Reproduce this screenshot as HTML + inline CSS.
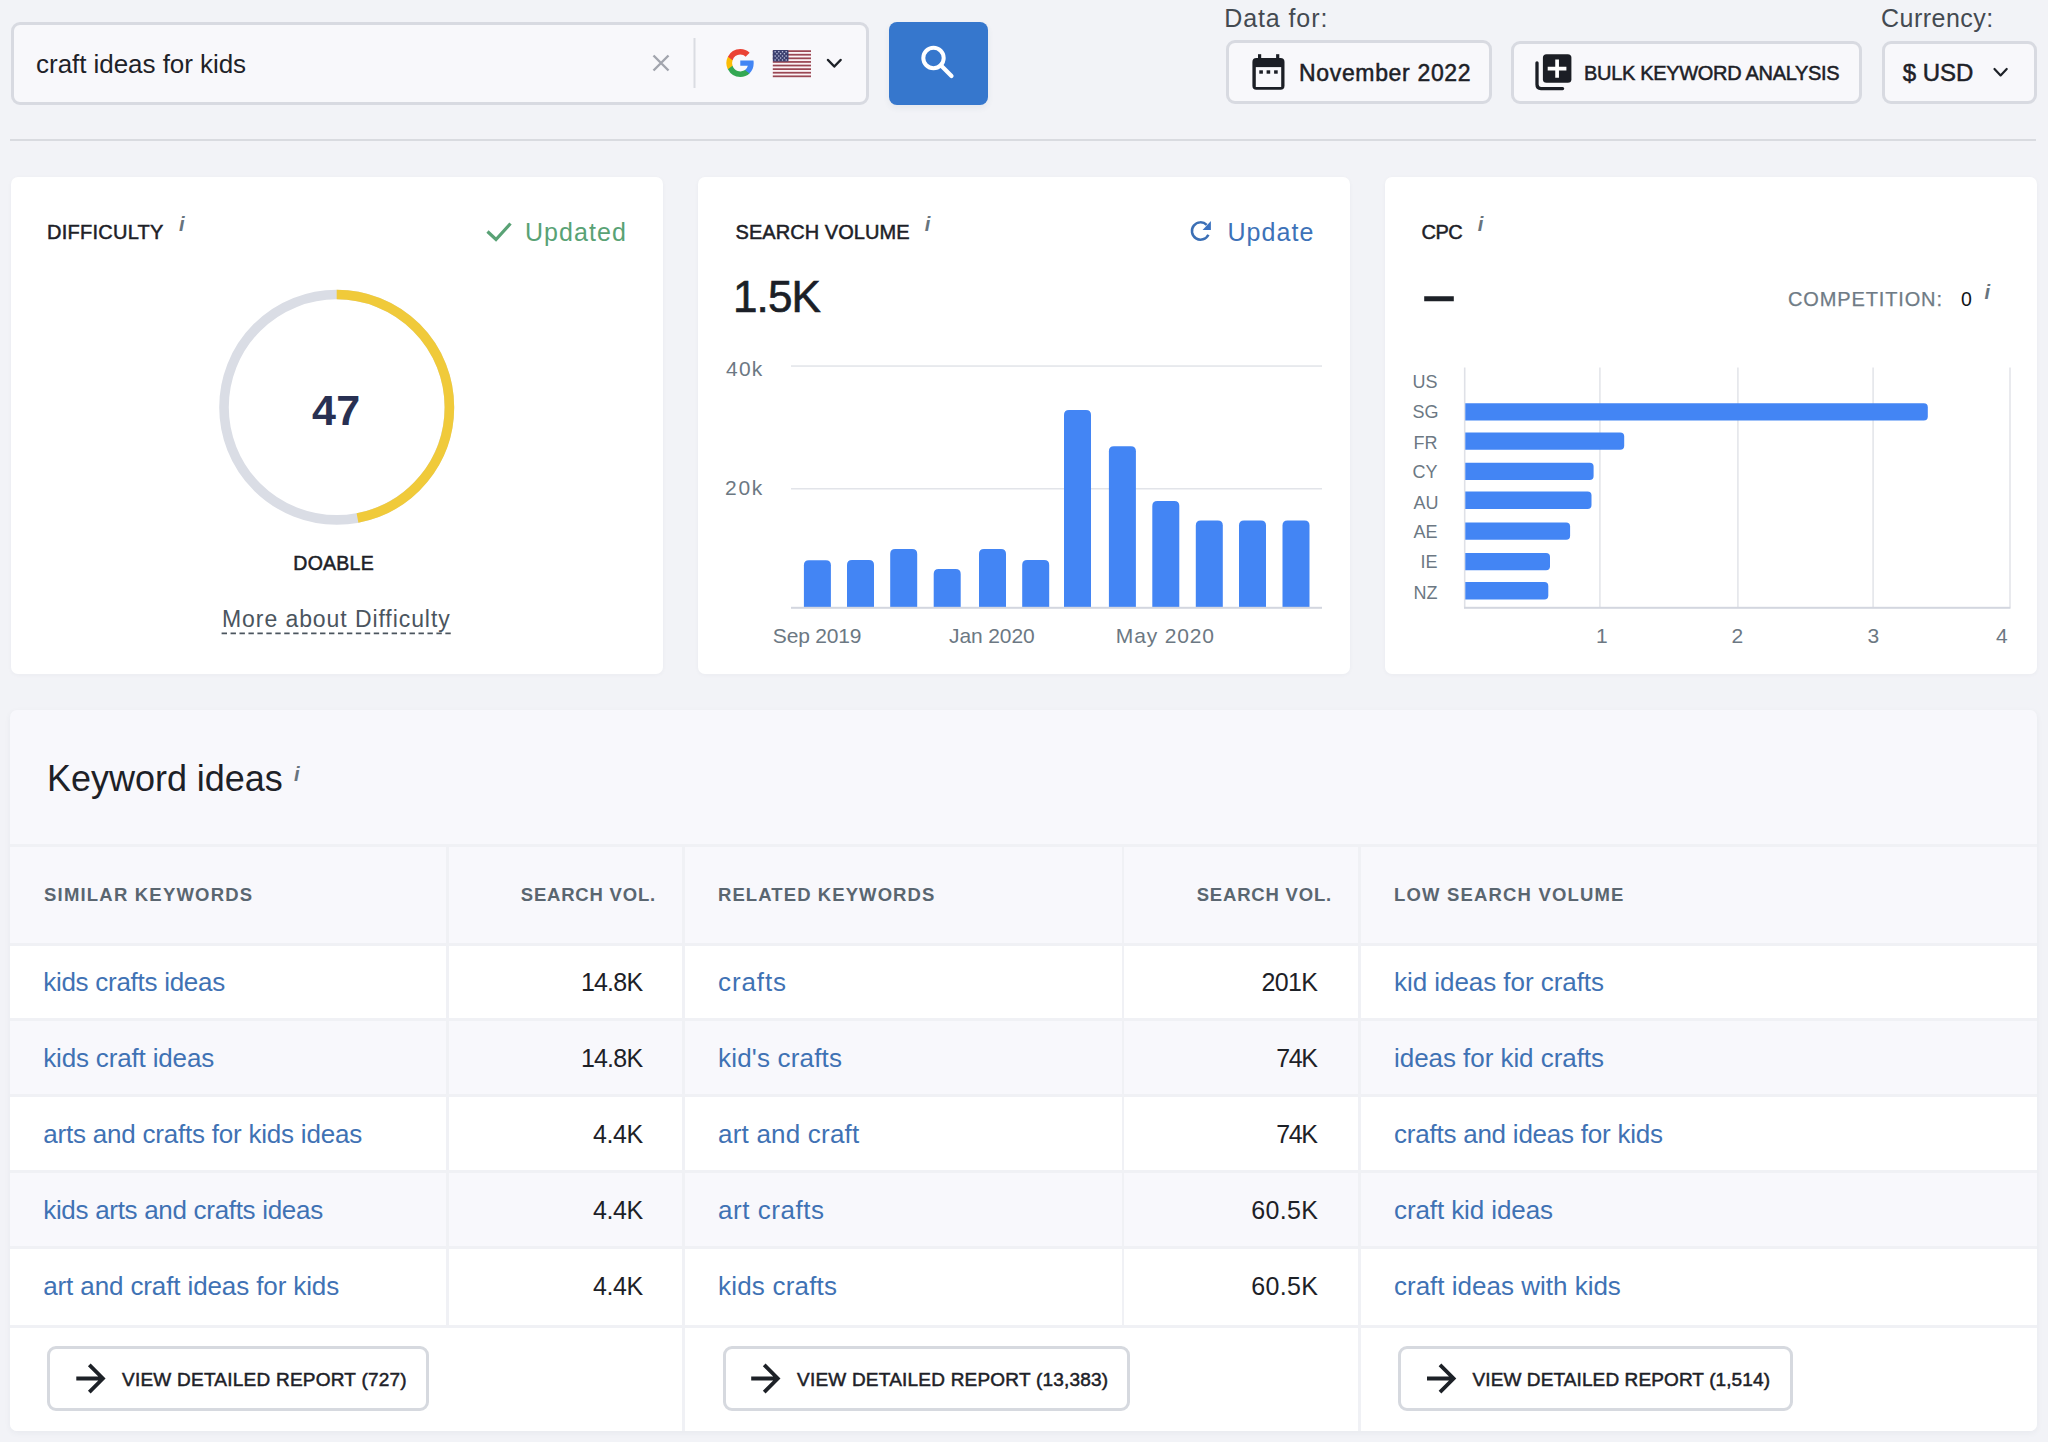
<!DOCTYPE html>
<html><head><meta charset="utf-8"><title>Keyword research</title>
<style>
html,body{margin:0;padding:0;}
body{width:2048px;height:1442px;overflow:hidden;background:#f2f3f7;position:relative;font-family:"Liberation Sans",sans-serif;}
.t{position:absolute;white-space:nowrap;line-height:1;font-family:"Liberation Sans",sans-serif;}
.a{position:absolute;box-sizing:border-box;}
.card{position:absolute;background:#fff;border-radius:7px;box-shadow:0 1px 4px rgba(40,50,80,0.04);}
.btn{position:absolute;box-sizing:border-box;border:3px solid #d8dae1;border-radius:9px;background:#f8f8fb;}
.wbtn{position:absolute;box-sizing:border-box;border:3px solid #d6d9df;border-radius:9px;background:#fff;}
svg{position:absolute;overflow:visible;}

</style></head>
<body>
<!-- header -->
<div class="btn" style="left:11px;top:22px;width:858px;height:83px;"></div>
<svg style="left:0;top:0" width="2048" height="150">
  <path d="M653.5 55.5 L668.5 70.5 M668.5 55.5 L653.5 70.5" stroke="#a2a5ae" stroke-width="2.4" fill="none"/>
  <rect x="693.5" y="38" width="2" height="50" fill="#dadce2"/>
  <!-- google G -->
  <g transform="translate(726.3,49) scale(1.165)">
    <path d="M23.5 12.27c0-.8-.07-1.57-.2-2.3H12v4.35h6.46a5.52 5.52 0 0 1-2.4 3.62v3h3.88c2.27-2.1 3.56-5.19 3.56-8.67z" fill="#4285F4"/>
    <path d="M12 24c3.24 0 5.96-1.07 7.94-2.9l-3.88-3a7.2 7.2 0 0 1-10.7-3.78H1.36v3.1A12 12 0 0 0 12 24z" fill="#34A853"/>
    <path d="M5.36 14.32a7.1 7.1 0 0 1 0-4.64v-3.1H1.36a12 12 0 0 0 0 10.84l4-3.1z" fill="#FBBC05"/>
    <path d="M12 4.77c1.76 0 3.34.6 4.59 1.8l3.44-3.44A11.5 11.5 0 0 0 12 0 12 12 0 0 0 1.36 6.58l4 3.1A7.17 7.17 0 0 1 12 4.77z" fill="#EA4335"/>
  </g>
  <!-- US flag -->
  <g transform="translate(772.8,49.9)">
    <rect x="0" y="0" width="38.2" height="26.7" rx="1.8" fill="#fbf3f5"/>
    <rect x="0" y="0.35" width="38.2" height="1.75" fill="#9a4753"/>
    <rect x="0" y="3.95" width="38.2" height="1.75" fill="#9a4753"/>
    <rect x="0" y="7.55" width="38.2" height="1.75" fill="#9a4753"/>
    <rect x="0" y="11.15" width="38.2" height="1.75" fill="#9a4753"/>
    <rect x="0" y="14.75" width="38.2" height="1.75" fill="#9a4753"/>
    <rect x="0" y="18.35" width="38.2" height="1.75" fill="#9a4753"/>
    <rect x="0" y="21.95" width="38.2" height="1.75" fill="#9a4753"/>
    <rect x="0" y="25.55" width="38.2" height="1.75" fill="#9a4753"/>
    <rect x="0" y="0" width="15.7" height="11.7" rx="1" fill="#3b3f6e"/>
    <g fill="#c9cbe6"><circle cx="2.30" cy="1.90" r=".75"/><circle cx="6.00" cy="1.90" r=".75"/><circle cx="9.70" cy="1.90" r=".75"/><circle cx="13.40" cy="1.90" r=".75"/><circle cx="4.15" cy="3.95" r=".75"/><circle cx="7.85" cy="3.95" r=".75"/><circle cx="11.55" cy="3.95" r=".75"/><circle cx="2.30" cy="6.00" r=".75"/><circle cx="6.00" cy="6.00" r=".75"/><circle cx="9.70" cy="6.00" r=".75"/><circle cx="13.40" cy="6.00" r=".75"/><circle cx="4.15" cy="8.05" r=".75"/><circle cx="7.85" cy="8.05" r=".75"/><circle cx="11.55" cy="8.05" r=".75"/><circle cx="2.30" cy="10.10" r=".75"/><circle cx="6.00" cy="10.10" r=".75"/><circle cx="9.70" cy="10.10" r=".75"/><circle cx="13.40" cy="10.10" r=".75"/></g>
  </g>
  <path d="M828 60 L834.3 66.5 L840.6 60" stroke="#1d2127" stroke-width="2.5" fill="none" stroke-linecap="round" stroke-linejoin="round"/>
</svg>
<div class="a" style="left:888.5px;top:22px;width:99.5px;height:82.5px;background:#3677cd;border-radius:8px;box-shadow:0 3px 6px rgba(60,80,120,0.07);"></div>
<svg style="left:0;top:0" width="2048" height="150">
  <circle cx="933.5" cy="58" r="10.2" stroke="#fff" stroke-width="4" fill="none"/>
  <path d="M940.8 65.3 L951.5 76" stroke="#fff" stroke-width="4.2" stroke-linecap="round"/>
</svg>
<div class="btn" style="left:1226px;top:40px;width:265.5px;height:64px;"></div>
<div class="btn" style="left:1511px;top:41px;width:351px;height:62.5px;"></div>
<div class="btn" style="left:1882px;top:41px;width:154.5px;height:62.5px;"></div>
<svg style="left:0;top:0" width="2048" height="150">
  <!-- calendar -->
  <g fill="#1b1e25">
    <rect x="1252.4" y="58" width="32.1" height="31.7" rx="4"/>
    <rect x="1258" y="54.2" width="3.2" height="6"/>
    <rect x="1276.1" y="54.2" width="3.2" height="6"/>
  </g>
  <rect x="1255.8" y="67.1" width="25.4" height="19.9" fill="#f8f8fb"/>
  <g fill="#1b1e25"><rect x="1259.3" y="70.3" width="3.6" height="3.4"/><rect x="1266.6" y="70.3" width="3.6" height="3.4"/><rect x="1274.1" y="70.3" width="3.6" height="3.4"/></g>
  <!-- bulk icon -->
  <path d="M1537 62.8 V84.6 Q1537 88.6 1541 88.6 H1562.6" stroke="#1b1e25" stroke-width="3.3" fill="none" stroke-linecap="round"/>
  <rect x="1542.9" y="54.2" width="28.5" height="28.6" rx="3.6" fill="#1b1e25"/>
  <path d="M1557.1 59.5 V77.8 M1547.7 68.6 H1566.4" stroke="#fff" stroke-width="3.7"/>
  <path d="M1994.5 69 L2000.6 75.4 L2006.7 69" stroke="#1d2127" stroke-width="2.2" fill="none" stroke-linecap="round" stroke-linejoin="round"/>
</svg>
<div class="a" style="left:10px;top:138.8px;width:2026px;height:2.2px;background:#d9dbe0;"></div>

<!-- cards -->
<div class="card" style="left:11px;top:176.5px;width:651.5px;height:497.5px;"></div>
<div class="card" style="left:698px;top:176.5px;width:651.5px;height:497.5px;"></div>
<div class="card" style="left:1385px;top:176.5px;width:652px;height:497.5px;"></div>

<svg style="left:0;top:0" width="2048" height="700">
  <!-- check -->
  <path d="M487.5 231.5 L496 239.5 L510.5 223.5" stroke="#59a275" stroke-width="3.2" fill="none"/>
  <!-- difficulty ring -->
  <circle cx="336.7" cy="407.2" r="112.7" stroke="#dadde5" stroke-width="9.6" fill="none"/>
  <circle cx="336.7" cy="407.2" r="112.7" stroke="#f0ca3a" stroke-width="9.6" fill="none"
     stroke-dasharray="332.81 1000" transform="rotate(-90 336.7 407.2)"/>
  <!-- dashed underline -->
  <line x1="221.6" y1="633.4" x2="451" y2="633.4" stroke="#4b555e" stroke-width="1.7" stroke-dasharray="5.4 3.55"/>
  <!-- refresh icon -->
  <path d="M1206.7 224.9 A8.65 8.65 0 1 0 1208.4 234.7" stroke="#3b6fb5" stroke-width="2.5" fill="none"/>
  <path d="M1210.9 221 L1210.9 230 L1202.6 230 Z" fill="#3b72c0"/>
  <!-- search volume chart -->
  <rect x="791" y="365.3" width="531" height="1.5" fill="#e2e4e9"/>
  <rect x="791" y="488" width="531" height="1.5" fill="#e2e4e9"/>
</svg>
<svg style="left:0;top:0" width="2048" height="700">
<g fill="#4385f4">
<path d="M803.9 607.5 V565.2 Q803.9 560.2 808.9 560.2 H825.9 Q830.9 560.2 830.9 565.2 V607.5 Z"/>
<path d="M847 607.5 V565 Q847 560 852 560 H869 Q874 560 874 565 V607.5 Z"/>
<path d="M890.2 607.5 V554 Q890.2 549 895.2 549 H912.2 Q917.2 549 917.2 554 V607.5 Z"/>
<path d="M933.7 607.5 V574 Q933.7 569 938.7 569 H955.7 Q960.7 569 960.7 574 V607.5 Z"/>
<path d="M979 607.5 V554 Q979 549 984 549 H1001 Q1006 549 1006 554 V607.5 Z"/>
<path d="M1022.2 607.5 V565 Q1022.2 560 1027.2 560 H1044.2 Q1049.2 560 1049.2 565 V607.5 Z"/>
<path d="M1064 607.5 V415 Q1064 410 1069 410 H1086 Q1091 410 1091 415 V607.5 Z"/>
<path d="M1108.9 607.5 V451.2 Q1108.9 446.2 1113.9 446.2 H1130.9 Q1135.9 446.2 1135.9 451.2 V607.5 Z"/>
<path d="M1152.3 607.5 V505.9 Q1152.3 500.9 1157.3 500.9 H1174.3 Q1179.3 500.9 1179.3 505.9 V607.5 Z"/>
<path d="M1195.8 607.5 V525.5 Q1195.8 520.5 1200.8 520.5 H1217.8 Q1222.8 520.5 1222.8 525.5 V607.5 Z"/>
<path d="M1239 607.5 V525.5 Q1239 520.5 1244 520.5 H1261 Q1266 520.5 1266 525.5 V607.5 Z"/>
<path d="M1282.5 607.5 V525.5 Q1282.5 520.5 1287.5 520.5 H1304.5 Q1309.5 520.5 1309.5 525.5 V607.5 Z"/>
</g>
<rect x="791" y="606.8" width="531" height="2" fill="#d3d6df"/>
<rect x="1599.15" y="367.5" width="1.5" height="240" fill="#e2e4e9"/>
<rect x="1737.15" y="367.5" width="1.5" height="240" fill="#e2e4e9"/>
<rect x="1872.35" y="367.5" width="1.5" height="240" fill="#e2e4e9"/>
<rect x="2009.25" y="367.5" width="1.5" height="240" fill="#e2e4e9"/>
<rect x="1463.9" y="367.5" width="1.6" height="240" fill="#dfe1e7"/>
<rect x="1464" y="606.8" width="546.5" height="2" fill="#d3d6df"/>
<g fill="#4385f4">
<path d="M1465.3 403.25 H1923.8 Q1927.8 403.25 1927.8 407.25 V416.55 Q1927.8 420.55 1923.8 420.55 H1465.3 Z"/>
<path d="M1465.3 432.4 H1620.2 Q1624.2 432.4 1624.2 436.4 V445.7 Q1624.2 449.7 1620.2 449.7 H1465.3 Z"/>
<path d="M1465.3 462.7 H1589.6 Q1593.6 462.7 1593.6 466.7 V476.0 Q1593.6 480.0 1589.6 480.0 H1465.3 Z"/>
<path d="M1465.3 491.6 H1587.5 Q1591.5 491.6 1591.5 495.6 V504.90000000000003 Q1591.5 508.90000000000003 1587.5 508.90000000000003 H1465.3 Z"/>
<path d="M1465.3 522.4 H1566.1 Q1570.1 522.4 1570.1 526.4 V535.6999999999999 Q1570.1 539.6999999999999 1566.1 539.6999999999999 H1465.3 Z"/>
<path d="M1465.3 553 H1546 Q1550 553 1550 557 V566.3 Q1550 570.3 1546 570.3 H1465.3 Z"/>
<path d="M1465.3 582.1 H1544.3 Q1548.3 582.1 1548.3 586.1 V595.4 Q1548.3 599.4 1544.3 599.4 H1465.3 Z"/>
</g>
<rect x="1424.2" y="296.25" width="29.6" height="5" fill="#1d2127"/>
</svg>
<div class="a" style="left:10px;top:709.7px;width:2027.3px;height:721.3px;background:#f8f8fc;border-radius:7px;overflow:hidden;box-shadow:0 2px 6px rgba(40,50,80,0.05);">
<div class="a" style="left:0;top:134.79999999999995px;width:100%;height:3px;background:#f0f1f5;"></div>
<div class="a" style="left:0;top:236.1px;width:100%;height:72.7px;background:#ffffff;"></div>
<div class="a" style="left:0;top:311.4px;width:100%;height:73.1px;background:#f8f8fc;"></div>
<div class="a" style="left:0;top:387.1px;width:100%;height:73.2px;background:#ffffff;"></div>
<div class="a" style="left:0;top:462.9px;width:100%;height:73.4px;background:#f8f8fc;"></div>
<div class="a" style="left:0;top:538.9px;width:100%;height:76.4px;background:#ffffff;"></div>
<div class="a" style="left:0;top:233.5px;width:100%;height:2.6px;background:#f0f1f5;"></div>
<div class="a" style="left:0;top:308.8px;width:100%;height:2.6px;background:#f0f1f5;"></div>
<div class="a" style="left:0;top:384.5px;width:100%;height:2.6px;background:#f0f1f5;"></div>
<div class="a" style="left:0;top:460.3px;width:100%;height:2.6px;background:#f0f1f5;"></div>
<div class="a" style="left:0;top:536.3px;width:100%;height:2.6px;background:#f0f1f5;"></div>
<div class="a" style="left:0;top:615.3px;width:100%;height:2.6px;background:#f0f1f5;"></div>
<div class="a" style="left:0;top:617.9px;width:100%;height:200px;background:#fff;"></div>
<div class="a" style="left:436.4px;top:136.3px;width:2.2px;height:479.0px;background:#f0f1f5;"></div>
<div class="a" style="left:671.9px;top:136.3px;width:3.2px;height:585.0px;background:#f0f1f5;"></div>
<div class="a" style="left:1111.7px;top:136.3px;width:2.6px;height:479.0px;background:#f0f1f5;"></div>
<div class="a" style="left:1347.6px;top:136.3px;width:3.4px;height:585.0px;background:#f0f1f5;"></div>
</div>
<div class="wbtn" style="left:47.3px;top:1346.3px;width:381.3px;height:64.5px;"></div>
<div class="wbtn" style="left:722.5px;top:1346.3px;width:407.2px;height:64.5px;"></div>
<div class="wbtn" style="left:1398.4px;top:1346.3px;width:394.2px;height:64.5px;"></div>
<svg style="left:0;top:0" width="2048" height="1442">
<path d="M76.3 1378.5 H103.3 M89.3 1364.8 L102.9 1378.5 L89.3 1392.2" stroke="#1d2127" stroke-width="3.8" fill="none" stroke-linejoin="miter"/>
<path d="M751.2 1378.5 H778.2 M764.2 1364.8 L777.8000000000001 1378.5 L764.2 1392.2" stroke="#1d2127" stroke-width="3.8" fill="none" stroke-linejoin="miter"/>
<path d="M1427 1378.5 H1454 M1440 1364.8 L1453.6 1378.5 L1440 1392.2" stroke="#1d2127" stroke-width="3.8" fill="none" stroke-linejoin="miter"/>
</svg>
<span class="t" style="left:36.10px;top:51.20px;font-size:26px;color:#1e2228;letter-spacing:-0.051px;">craft ideas for kids</span>
<span class="t" style="left:1224.20px;top:6.05px;font-size:25px;color:#444a51;letter-spacing:0.909px;">Data for:</span>
<span class="t" style="left:1299.00px;top:62.45px;font-size:23px;color:#1d2127;-webkit-text-stroke:0.50px #1d2127;letter-spacing:0.662px;">November 2022</span>
<span class="t" style="left:1584.00px;top:63.30px;font-size:20px;color:#1d2127;-webkit-text-stroke:0.50px #1d2127;letter-spacing:-0.315px;">BULK KEYWORD ANALYSIS</span>
<span class="t" style="left:1881.00px;top:5.55px;font-size:25px;color:#444a51;letter-spacing:0.485px;">Currency:</span>
<span class="t" style="left:1902.70px;top:61.20px;font-size:24px;color:#1d2127;-webkit-text-stroke:0.50px #1d2127;letter-spacing:0.011px;">$ USD</span>
<span class="t" style="left:47.00px;top:221.70px;font-size:20px;color:#1d2127;-webkit-text-stroke:0.50px #1d2127;letter-spacing:0.263px;">DIFFICULTY</span>
<span class="t" style="left:179.00px;top:214.00px;font-size:20px;color:#67747e;font-weight:700;font-style:italic;">i</span>
<span class="t" style="left:525.00px;top:219.75px;font-size:25px;color:#59a275;letter-spacing:1.064px;">Updated</span>
<span class="t" style="left:312.00px;top:388.55px;font-size:43px;color:#283052;font-weight:700;letter-spacing:0.285px;">47</span>
<span class="t" style="left:293.35px;top:554.22px;font-size:19.5px;color:#1d2127;-webkit-text-stroke:0.50px #1d2127;letter-spacing:0.238px;">DOABLE</span>
<span class="t" style="left:222.00px;top:607.95px;font-size:23px;color:#4b555e;letter-spacing:0.924px;">More about Difficulty</span>
<span class="t" style="left:735.50px;top:221.60px;font-size:20px;color:#1d2127;-webkit-text-stroke:0.50px #1d2127;letter-spacing:0.056px;">SEARCH VOLUME</span>
<span class="t" style="left:924.70px;top:213.60px;font-size:20px;color:#67747e;font-weight:700;font-style:italic;">i</span>
<span class="t" style="left:1227.40px;top:219.55px;font-size:25px;color:#3d72b8;letter-spacing:1.058px;">Update</span>
<span class="t" style="left:733.00px;top:274.50px;font-size:44px;color:#1b1f27;-webkit-text-stroke:0.65px #1b1f27;letter-spacing:-0.855px;">1.5K</span>
<span class="t" style="left:726.00px;top:358.15px;font-size:21px;color:#6c7883;letter-spacing:1.221px;">40k</span>
<span class="t" style="left:725.00px;top:477.45px;font-size:21px;color:#6c7883;letter-spacing:1.721px;">20k</span>
<span class="t" style="left:772.80px;top:625.15px;font-size:21px;color:#6c7883;letter-spacing:-0.177px;">Sep 2019</span>
<span class="t" style="left:949.00px;top:625.15px;font-size:21px;color:#6c7883;letter-spacing:-0.104px;">Jan 2020</span>
<span class="t" style="left:1115.80px;top:625.15px;font-size:21px;color:#6c7883;letter-spacing:0.837px;">May 2020</span>
<span class="t" style="left:1421.50px;top:221.75px;font-size:20px;color:#1d2127;-webkit-text-stroke:0.50px #1d2127;letter-spacing:-0.492px;">CPC</span>
<span class="t" style="left:1477.70px;top:214.40px;font-size:20px;color:#67747e;font-weight:700;font-style:italic;">i</span>
<span class="t" style="left:1788.00px;top:289.40px;font-size:20px;color:#6f7b85;-webkit-text-stroke:0.25px #6f7b85;letter-spacing:0.865px;">COMPETITION:</span>
<span class="t" style="left:1961.10px;top:289.53px;font-size:19.5px;color:#111418;">0</span>
<span class="t" style="left:1984.50px;top:282.20px;font-size:20px;color:#67747e;font-weight:700;font-style:italic;">i</span>
<span class="t" style="left:1412.60px;top:373.00px;font-size:18px;color:#6c7883;">US</span>
<span class="t" style="left:1412.59px;top:403.10px;font-size:18px;color:#6c7883;">SG</span>
<span class="t" style="left:1413.60px;top:434.30px;font-size:18px;color:#6c7883;">FR</span>
<span class="t" style="left:1412.60px;top:463.45px;font-size:18px;color:#6c7883;">CY</span>
<span class="t" style="left:1413.59px;top:493.60px;font-size:18px;color:#6c7883;">AU</span>
<span class="t" style="left:1413.59px;top:522.70px;font-size:18px;color:#6c7883;">AE</span>
<span class="t" style="left:1420.60px;top:552.90px;font-size:18px;color:#6c7883;">IE</span>
<span class="t" style="left:1413.60px;top:584.10px;font-size:18px;color:#6c7883;">NZ</span>
<span class="t" style="left:1595.90px;top:625.35px;font-size:21px;color:#6c7883;">1</span>
<span class="t" style="left:1731.50px;top:625.35px;font-size:21px;color:#6c7883;">2</span>
<span class="t" style="left:1867.50px;top:625.35px;font-size:21px;color:#6c7883;">3</span>
<span class="t" style="left:1996.00px;top:625.35px;font-size:21px;color:#6c7883;">4</span>
<span class="t" style="left:47.00px;top:760.50px;font-size:36px;color:#1d2127;letter-spacing:-0.027px;">Keyword ideas</span>
<span class="t" style="left:294.00px;top:763.80px;font-size:20px;color:#67747e;font-weight:700;font-style:italic;">i</span>
<span class="t" style="left:44.00px;top:885.98px;font-size:18.5px;color:#5a6670;font-weight:700;letter-spacing:1.200px;">SIMILAR KEYWORDS</span>
<span class="t" style="left:520.80px;top:885.98px;font-size:18.5px;color:#5a6670;font-weight:700;letter-spacing:0.791px;">SEARCH VOL.</span>
<span class="t" style="left:718.00px;top:885.98px;font-size:18.5px;color:#5a6670;font-weight:700;letter-spacing:1.084px;">RELATED KEYWORDS</span>
<span class="t" style="left:1196.70px;top:885.98px;font-size:18.5px;color:#5a6670;font-weight:700;letter-spacing:0.801px;">SEARCH VOL.</span>
<span class="t" style="left:1394.00px;top:885.98px;font-size:18.5px;color:#5a6670;font-weight:700;letter-spacing:1.166px;">LOW SEARCH VOLUME</span>
<span class="t" style="left:43.20px;top:968.70px;font-size:26px;color:#3f72b4;letter-spacing:-0.275px;">kids crafts ideas</span>
<span class="t" style="left:580.90px;top:969.55px;font-size:25px;color:#1d2127;letter-spacing:-0.789px;">14.8K</span>
<span class="t" style="left:718.00px;top:968.70px;font-size:26px;color:#3f72b4;letter-spacing:0.887px;">crafts</span>
<span class="t" style="left:1261.60px;top:969.55px;font-size:25px;color:#1d2127;letter-spacing:-0.670px;">201K</span>
<span class="t" style="left:1394.00px;top:968.70px;font-size:26px;color:#3f72b4;letter-spacing:-0.051px;">kid ideas for crafts</span>
<span class="t" style="left:43.20px;top:1044.70px;font-size:26px;color:#3f72b4;letter-spacing:-0.160px;">kids craft ideas</span>
<span class="t" style="left:580.90px;top:1045.55px;font-size:25px;color:#1d2127;letter-spacing:-0.789px;">14.8K</span>
<span class="t" style="left:718.00px;top:1044.70px;font-size:26px;color:#3f72b4;letter-spacing:0.183px;">kid&#x27;s crafts</span>
<span class="t" style="left:1276.30px;top:1045.55px;font-size:25px;color:#1d2127;letter-spacing:-1.404px;">74K</span>
<span class="t" style="left:1394.00px;top:1044.70px;font-size:26px;color:#3f72b4;letter-spacing:-0.051px;">ideas for kid crafts</span>
<span class="t" style="left:43.20px;top:1120.70px;font-size:26px;color:#3f72b4;letter-spacing:-0.212px;">arts and crafts for kids ideas</span>
<span class="t" style="left:592.90px;top:1121.55px;font-size:25px;color:#1d2127;letter-spacing:-0.418px;">4.4K</span>
<span class="t" style="left:718.00px;top:1120.70px;font-size:26px;color:#3f72b4;letter-spacing:0.207px;">art and craft</span>
<span class="t" style="left:1276.30px;top:1121.55px;font-size:25px;color:#1d2127;letter-spacing:-1.404px;">74K</span>
<span class="t" style="left:1394.00px;top:1120.70px;font-size:26px;color:#3f72b4;letter-spacing:-0.232px;">crafts and ideas for kids</span>
<span class="t" style="left:43.20px;top:1196.70px;font-size:26px;color:#3f72b4;letter-spacing:-0.303px;">kids arts and crafts ideas</span>
<span class="t" style="left:592.90px;top:1197.55px;font-size:25px;color:#1d2127;letter-spacing:-0.418px;">4.4K</span>
<span class="t" style="left:718.00px;top:1196.70px;font-size:26px;color:#3f72b4;letter-spacing:0.541px;">art crafts</span>
<span class="t" style="left:1251.30px;top:1197.55px;font-size:25px;color:#1d2127;letter-spacing:0.336px;">60.5K</span>
<span class="t" style="left:1394.00px;top:1196.70px;font-size:26px;color:#3f72b4;letter-spacing:-0.100px;">craft kid ideas</span>
<span class="t" style="left:43.20px;top:1272.70px;font-size:26px;color:#3f72b4;letter-spacing:-0.116px;">art and craft ideas for kids</span>
<span class="t" style="left:592.90px;top:1273.55px;font-size:25px;color:#1d2127;letter-spacing:-0.418px;">4.4K</span>
<span class="t" style="left:718.00px;top:1272.70px;font-size:26px;color:#3f72b4;letter-spacing:0.197px;">kids crafts</span>
<span class="t" style="left:1251.30px;top:1273.55px;font-size:25px;color:#1d2127;letter-spacing:0.336px;">60.5K</span>
<span class="t" style="left:1394.00px;top:1272.70px;font-size:26px;color:#3f72b4;">craft ideas with kids</span>
<span class="t" style="left:122.00px;top:1370.45px;font-size:19px;color:#1d2127;-webkit-text-stroke:0.50px #1d2127;letter-spacing:0.238px;">VIEW DETAILED REPORT (727)</span>
<span class="t" style="left:797.00px;top:1370.45px;font-size:19px;color:#1d2127;-webkit-text-stroke:0.50px #1d2127;letter-spacing:0.215px;">VIEW DETAILED REPORT (13,383)</span>
<span class="t" style="left:1472.50px;top:1370.45px;font-size:19px;color:#1d2127;-webkit-text-stroke:0.50px #1d2127;letter-spacing:0.107px;">VIEW DETAILED REPORT (1,514)</span>
</body></html>
